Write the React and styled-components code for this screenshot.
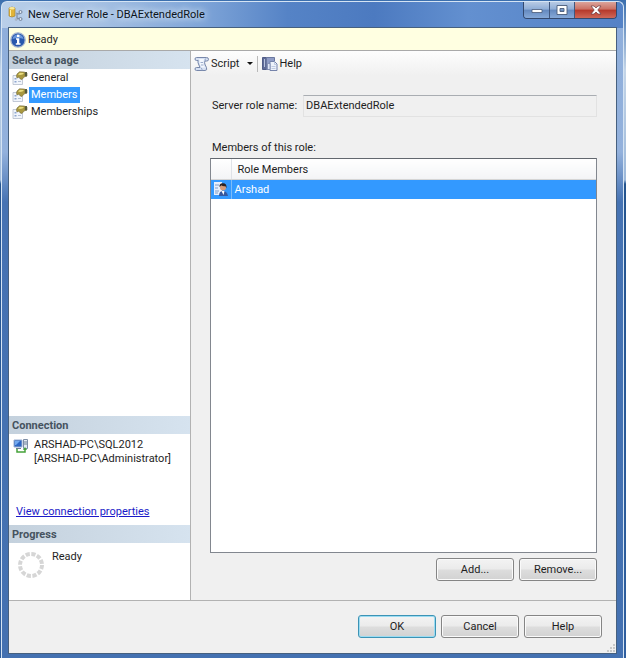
import React, { useState } from "react";
import styled, { createGlobalStyle } from "styled-components";

const GlobalStyle = createGlobalStyle`
  * {
    box-sizing: border-box;
  }
  body {
    margin: 0;
    background: #2f5d9b;
    font-family: Roboto, "Open Sans", sans-serif;
    font-size: 11px;
    line-height: 14px;
    color: #1e1e1e;
  }
  button, input {
    font: inherit;
    color: inherit;
  }
`;

const Desktop = styled.div`
  min-height: 100vh;
  display: flex;
  padding: 1px 2px 0 1px;
  background: linear-gradient(#3b6fae, #c4d5e8 70px, #9db9da 180px, #24548f 184px, #2f5f9f);
`;
const Window = styled.div`
  flex: 1;
  min-width: 0;
  display: flex;
  flex-direction: column;
  padding: 0 6px 4px 6px;
  border: 1px solid #d5e4f4;
  border-bottom: 0;
  border-radius: 6px 6px 0 0;
  background:
    linear-gradient(90deg, #b9cfe9, #a6c1e3 15%, #7fa5d8 32%, #5583c6 46%, #4c7ac0 60%, #6390d0 75%, #5482c6) 0 0 / 100% 26px no-repeat,
    linear-gradient(#8eaedb, #93b1dc 150px, #4673b3 200px, #4471b1);
`;
const TitleBar = styled.header`
  height: 25px;
  display: flex;
  align-items: flex-start;
  gap: 5px;
`;
const TitleIcon = styled.svg`
  flex: none;
  width: 15px;
  height: 16px;
  margin-top: 4px;
`;
const Title = styled.h1`
  flex: 1;
  margin: 0;
  padding-top: 6px;
  font-size: 11px;
  font-weight: 400;
  line-height: 14px;
  white-space: nowrap;
  color: #0c1420;
  text-shadow: 0 0 6px #dce9f8, 0 0 8px #dce9f8;
`;
const WindowButtons = styled.div`
  display: flex;
  border: 1px solid #34496e;
  border-top: 0;
  border-radius: 0 0 4px 4px;
  overflow: hidden;
`;
const WindowButton = styled.button`
  display: flex;
  align-items: center;
  justify-content: center;
  width: ${({ $close }) => ($close ? "42px" : "25px")};
  height: 16px;
  padding: 0;
  border: 0;
  border-left: ${({ $first }) => ($first ? "0" : "1px solid #40577e")};
  background: ${({ $close }) =>
    $close
      ? "linear-gradient(#dba49b, #cb7063 45%, #b5382a 50%, #cf6858)"
      : "linear-gradient(#b7cae4, #8fadd6 45%, #6489bf 50%, #86a9d8)"};
`;

const Client = styled.main`
  flex: 1;
  display: flex;
  flex-direction: column;
  border: 1px solid #46607f;
  background: #f0f0f0;
`;
const InfoBar = styled.div`
  height: 23px;
  display: flex;
  align-items: center;
  gap: 2px;
  padding: 1px 0 0 1px;
  background: #ffffe1;
  border-bottom: 1px solid #a9a9a9;
`;
const Body = styled.div`
  flex: 1;
  display: flex;
  border-bottom: 1px solid #b2b2b2;
`;

const Sidebar = styled.aside`
  flex: none;
  width: 182px;
  display: flex;
  flex-direction: column;
  background: #fff;
  border-right: 1px solid #b2b2b2;
`;
const Band = styled.h2`
  height: 18px;
  margin: 0;
  padding: 3px 3px 1px;
  font-size: 11px;
  line-height: 14px;
  font-weight: 700;
  color: #46535f;
  background: linear-gradient(90deg, #c4d1dd, #d6e3ef);
`;
const Pages = styled.nav`
  flex: 1;
  display: flex;
  flex-direction: column;
  align-items: flex-start;
`;
const PageRow = styled.button`
  display: flex;
  align-items: center;
  gap: 1px;
  height: 17px;
  padding: 0 0 0 3px;
  border: 0;
  background: none;
`;
const PageName = styled.span`
  padding: 1px 2px;
  line-height: 14px;
  color: ${({ $active }) => ($active ? "#fff" : "inherit")};
  background: ${({ $active }) => ($active ? "#3399ff" : "none")};
`;
const Connection = styled.section`
  height: 109px;
  display: flex;
  flex-direction: column;
`;
const Server = styled.div`
  flex: 1;
  display: flex;
  gap: 5px;
  padding: 4px 4px 3px;
  white-space: nowrap;
`;
const PropertiesLink = styled.a`
  padding: 0 0 6px 7px;
  color: #1a1ac8;
`;
const Progress = styled.section`
  height: 75px;
`;
const ProgressRow = styled.div`
  display: flex;
  gap: 6px;
  padding: 7px;
`;

const Content = styled.section`
  flex: 1;
  min-width: 0;
  display: flex;
  flex-direction: column;
`;
const Toolbar = styled.div`
  height: 25px;
  display: flex;
  align-items: center;
  padding-left: 3px;
  background: linear-gradient(#fdfdfd, #f0f0f0);
`;
const ToolButton = styled.button`
  display: flex;
  align-items: center;
  gap: 1px;
  padding: 0;
  border: 0;
  background: none;
`;
const Caret = styled.span`
  width: 0;
  margin: 0 4px 0 7px;
  border: 3px solid transparent;
  border-top-color: #111;
  border-bottom: 0;
`;
const Divider = styled.span`
  width: 1px;
  height: 16px;
  margin-right: 4px;
  background: #b9b9b9;
`;
const Form = styled.div`
  flex: 1;
  display: flex;
  flex-direction: column;
  padding: 19px;
`;
const Field = styled.div`
  display: flex;
  align-items: center;
  gap: 6px;
  margin-bottom: 24px;
  padding-left: 2px;
`;
const NameInput = styled.input`
  flex: 1;
  min-width: 0;
  height: 22px;
  padding: 0 2px 2px;
  border: 1px solid #e2e2e2;
  border-top-color: #a9adb2;
  background: #f0f0f0;
`;
const ListLabel = styled.div`
  padding: 0 2px 3px;
`;
const ListBox = styled.div`
  flex: 1;
  background: #fff;
  border: 1px solid #82878f;
  border-top-color: #62676e;
`;
const Table = styled.table`
  width: 100%;
  border-collapse: collapse;
  table-layout: fixed;
`;
const HeadCell = styled.th`
  width: ${({ $icon }) => ($icon ? "20px" : "auto")};
  height: 20px;
  padding: 2px 6px 0;
  font-weight: 400;
  text-align: left;
  background: linear-gradient(#fff, #f3f4f6);
  border-right: ${({ $icon }) => ($icon ? "1px solid #e0e3e8" : "0")};
  border-bottom: 1px solid #d5d5d5;
`;
const Cell = styled.td`
  height: 20px;
  padding: ${({ $icon }) => ($icon ? "0 2px" : "2px 3px 0")};
  color: #fff;
  background: #3399ff;
  border-right: ${({ $icon }) => ($icon ? "1px solid #7dbcf8" : "0")};
`;
const Actions = styled.div`
  display: flex;
  justify-content: flex-end;
  gap: 5px;
  padding-top: 5px;
`;
const Button = styled.button`
  width: 78px;
  height: 23px;
  padding: 1px 0 0;
  border: 1px solid ${({ $default }) => ($default ? "#3c93b5" : "#858585")};
  border-radius: 3px;
  background: linear-gradient(#f3f3f3, #ebebeb 48%, #dddddd 52%, #d2d2d2);
  box-shadow: inset 0 0 0 1px ${({ $default }) => ($default ? "#9bdcf2" : "#fafafa")};
`;
const Footer = styled.footer`
  height: 52px;
  display: flex;
  justify-content: flex-end;
  align-items: flex-start;
  gap: 5px;
  padding: 14px 0 0 15px;
`;
const Grip = styled.svg`
  align-self: flex-end;
  width: 9px;
  height: 9px;
`;

const svgSize = (size) => ({ width: size, height: size, viewBox: "0 0 16 16", "aria-hidden": true });

const PageIcon = () => (
  <svg {...svgSize(16)}>
    <path d="M1 5.500h9.500v9H1z" fill="#f1f5fb" stroke="#b4bdcb" strokeWidth=".8" />
    <path d="M2.500 8h2v1.500h-2zM2.500 11h2v1.500h-2z" fill="#8ea6cf" />
    <path d="M6 11h3v1H6z" fill="#b5c1d6" />
    <path d="M5 4l2.500-2.200L12 2l3 1v3l-3 1-2 2.500-1.800-.5L7 7 5 8 4.500 6z" fill="#a9983f" stroke="#736a38" strokeWidth=".6" />
    <path d="M6 4.500L8 2.800l4 .2-1.500 1.500L8 5z" fill="#e9dc7d" />
    <path d="M12.800 2.300L15 2v4.500l-2.200-.5z" fill="#555a3c" />
  </svg>
);

const InfoIcon = () => (
  <svg {...svgSize(16)}>
    <circle cx="8" cy="8" r="7.2" fill="#2857ad" stroke="#a6b5ce" strokeWidth="1.3" />
    <path d="M2.5 7a5.6 5.6 0 0 1 11 0q-5-2-11 0z" fill="#6b97db" />
    <path d="M7 2.7h2.4v2.2H7zM6 6.3h3.3v5h1.2v1.5H5.8v-1.5H7V7.7H6z" fill="#fff" />
  </svg>
);

const ScriptIcon = () => (
  <svg {...svgSize(16)}>
    <path d="M2.500 1.500h10q2 0 2 1.800T12.800 5H11q-1 1.500.2 4l1.300 2.500q1 3-1.500 3H2.500Q1 14.500 1 13t1.500-1.500H6L4.500 8Q3.500 6 4.200 4.500H2.500Q1 4.500 1 3t1.500-1.500z" fill="#d6e0f2" stroke="#7787aa" />
    <path d="M5 3h5L9.500 5q-.5 2 .5 4l1 2.500H7.500L6 8.500Q5 6 5.500 4.500z" fill="#f3f7fd" />
    <path d="M6.500 6.500h2.500M7 9h2.500M12.500 2q-1.800.8-1.500 3M7 12q1.500.5 1 2.500" fill="none" stroke="#92a3c4" strokeWidth=".9" />
  </svg>
);

const HelpIcon = () => (
  <svg {...svgSize(16)}>
    <path d="M.5 1.500h4v12h-4z" fill="#5f6b97" stroke="#505c87" />
    <path d="M2 3h1v8H2z" fill="#b9c4df" />
    <path d="M4.500 1.500h8v12h-8z" fill="#8f9cc6" stroke="#6a779f" />
    <path d="M8 5.500h4.500l2.500 2.500v6.500H8z" fill="#edf2fb" stroke="#7583aa" />
    <path d="M5.500 7.500H8v6H5.500z" fill="#dfe6f5" stroke="#7583aa" strokeWidth=".7" />
    <path d="M12.500 5.500v3H15M9.500 10.500h4M9.500 12.500h4" fill="none" stroke="#b3bfda" strokeWidth=".8" />
  </svg>
);

const UserIcon = () => (
  <svg {...svgSize(16)} style={{ display: "block" }}>
    <path d="M1 1h8v13H1z" fill="#e7effb" />
    <path d="M2 4h4M2 7h3M2 10h4M2 12h3" stroke="#7f9cca" />
    <path d="M6 15q0-5 4-5t5 5z" fill="#35589f" />
    <path d="M8.500 10h3l-1 4z" fill="#fff" />
    <circle cx="10" cy="6.500" r="3" fill="#d59c7c" />
    <path d="M6.500 6Q6 2 10 2.200q4 0 3.500 5l-1-2q-3 .5-4-1z" fill="#2d2222" />
  </svg>
);

const ServerIcon = () => (
  <svg {...svgSize(16)}>
    <path d="M1 2h8v7H1z" fill="#2d66c4" stroke="#9aafd0" />
    <path d="M2 3h5L3 7H2z" fill="#72a9ef" />
    <path d="M3 10h5v1H3z" fill="#6d7b91" />
    <path d="M10.500 1.500h4v9h-4z" fill="#e3eaf2" stroke="#7d8da5" />
    <path d="M11 4h3M11 6h3" stroke="#6f8199" />
    <path d="M4 11v3h8v-3" fill="none" stroke="#45a23a" strokeWidth="1.5" />
    <path d="M10 12l2-3 2 3z" fill="#45a23a" />
  </svg>
);

const Spinner = () => (
  <svg width="30" height="30" viewBox="0 0 30 30" aria-hidden="true">
    <circle cx="15" cy="15" r="11" fill="none" stroke="#d6d6d6" strokeWidth="4" strokeDasharray="4.2 1.559" />
  </svg>
);

const pages = ["General", "Members", "Memberships"];

const App = () => {
  const [page, setPage] = useState("Members");

  return (
    <>
      <GlobalStyle />
      <Desktop>
        <Window>
          <TitleBar>
            <TitleIcon viewBox="0 0 15 16" aria-hidden="true">
              <path d="M1 2q3-2 6 0v8q-3 2-6 0z" fill="#e2b437" stroke="#a4853b" strokeWidth=".7" />
              <ellipse cx="4" cy="2.300" rx="2.800" ry="1.200" fill="#fae99a" />
              <path d="M2.500 4v6" stroke="#fff0a5" />
              <path d="M8 7l3 1 2-2M9 8v4l4 1M8 14l2-2" fill="none" stroke="#7e8da3" strokeWidth="1.200" />
              <circle cx="12.500" cy="6" r="1.500" fill="#e1e8f0" stroke="#71819a" />
              <circle cx="12.500" cy="13" r="1.500" fill="#e1e8f0" stroke="#71819a" />
              <circle cx="8" cy="13.500" r="1.300" fill="#a9b5c4" />
            </TitleIcon>
            <Title>New Server Role - DBAExtendedRole</Title>
            <WindowButtons>
              <WindowButton $first aria-label="Minimize">
                <svg width="12" height="6" viewBox="0 0 12 6">
                  <path d="M1 2.500h10v3H1z" fill="#fff" stroke="#4a5b78" strokeWidth=".8" />
                </svg>
              </WindowButton>
              <WindowButton aria-label="Maximize">
                <svg width="12" height="10" viewBox="0 0 12 10">
                  <path d="M1 .5h10v9H1zM4 3.500v3h4v-3z" fill="#fff" fillRule="evenodd" stroke="#4a5b78" strokeWidth=".9" />
                </svg>
              </WindowButton>
              <WindowButton $close aria-label="Close">
                <svg width="12" height="10" viewBox="0 0 12 10">
                  <path d="M1 1h3l2 2 2-2h3L7.800 5 11 9H8L6 7 4 9H1l3.200-4z" fill="#fff" stroke="#6b3b42" strokeWidth=".7" />
                </svg>
              </WindowButton>
            </WindowButtons>
          </TitleBar>

          <Client>
            <InfoBar>
              <InfoIcon />
              Ready
            </InfoBar>
            <Body>
              <Sidebar>
                <Band>Select a page</Band>
                <Pages>
                  {pages.map((name) => (
                    <PageRow key={name} onClick={() => setPage(name)}>
                      <PageIcon />
                      <PageName $active={name === page}>{name}</PageName>
                    </PageRow>
                  ))}
                </Pages>
                <Connection>
                  <Band>Connection</Band>
                  <Server>
                    <ServerIcon />
                    <span>
                      ARSHAD-PC\SQL2012
                      <br />
                      [ARSHAD-PC\Administrator]
                    </span>
                  </Server>
                  <PropertiesLink href="#">View connection properties</PropertiesLink>
                </Connection>
                <Progress>
                  <Band>Progress</Band>
                  <ProgressRow>
                    <Spinner />
                    Ready
                  </ProgressRow>
                </Progress>
              </Sidebar>

              <Content>
                <Toolbar>
                  <ToolButton>
                    <ScriptIcon />
                    Script
                    <Caret />
                  </ToolButton>
                  <Divider />
                  <ToolButton>
                    <HelpIcon />
                    Help
                  </ToolButton>
                </Toolbar>
                <Form>
                  <Field>
                    <label htmlFor="role-name">Server role name:</label>
                    <NameInput id="role-name" readOnly value="DBAExtendedRole" />
                  </Field>
                  <ListLabel id="members-label">Members of this role:</ListLabel>
                  <ListBox>
                    <Table aria-labelledby="members-label">
                      <thead>
                        <tr>
                          <HeadCell $icon />
                          <HeadCell>Role Members</HeadCell>
                        </tr>
                      </thead>
                      <tbody>
                        <tr>
                          <Cell $icon>
                            <UserIcon />
                          </Cell>
                          <Cell>Arshad</Cell>
                        </tr>
                      </tbody>
                    </Table>
                  </ListBox>
                  <Actions>
                    <Button>Add...</Button>
                    <Button>Remove...</Button>
                  </Actions>
                </Form>
              </Content>
            </Body>
            <Footer>
              <Button $default>OK</Button>
              <Button>Cancel</Button>
              <Button>Help</Button>
              <Grip viewBox="0 0 9 9" aria-hidden="true">
                <path d="M6 0h2v2H6zM6 3h2v2H6zM6 6h2v2H6zM3 3h2v2H3zM3 6h2v2H3zM0 6h2v2H0z" fill="#c9c9c9" />
              </Grip>
            </Footer>
          </Client>
        </Window>
      </Desktop>
    </>
  );
};

export default App;
